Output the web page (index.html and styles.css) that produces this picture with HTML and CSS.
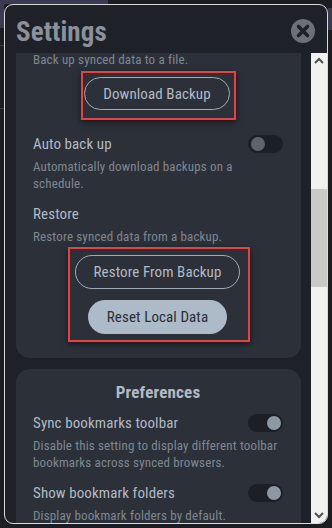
FILE: index.html
```html
<!DOCTYPE html>
<html>
<head>
<meta charset="utf-8">
<link rel="stylesheet" href="styles.css">
</head>
<body>
<div class="modal">
  <header class="modal-header">
    <h1 class="title">Settings</h1>
    <button class="close" aria-label="Close">
      <svg width="24" height="24" viewBox="0 0 24 24"><circle cx="12" cy="12" r="12" fill="#6b7079"/><path d="M7.5 7.5 L16.5 16.5 M16.5 7.5 L7.5 16.5" stroke="#1e2128" stroke-width="3.6" stroke-linecap="round"/></svg>
    </button>
  </header>
  <div class="body">
    <div class="viewport">
      <section class="card first">
        <p class="desc lead">Back up synced data to a file.</p>
        <div class="btn-row">
          <div class="hl-wrap">
            <button class="btn outline">Download Backup</button>
            <span class="hl hl-1"></span>
          </div>
        </div>
        <div class="row">
          <span class="label">Auto back up</span>
          <span class="toggle"><span class="knob"></span></span>
        </div>
        <p class="desc">Automatically download backups on a<br>schedule.</p>
        <div class="row">
          <span class="label">Restore</span>
        </div>
        <p class="desc">Restore synced data from a backup.</p>
        <div class="btn-group">
          <button class="btn outline">Restore From Backup</button>
          <button class="btn filled">Reset Local Data</button>
          <span class="hl hl-2"></span>
        </div>
      </section>
      <section class="card">
        <h2 class="card-title">Preferences</h2>
        <div class="row">
          <span class="label">Sync bookmarks toolbar</span>
          <span class="toggle on"><span class="knob"></span></span>
        </div>
        <p class="desc">Disable this setting to display different toolbar<br>bookmarks across synced browsers.</p>
        <div class="row">
          <span class="label">Show bookmark folders</span>
          <span class="toggle on"><span class="knob"></span></span>
        </div>
        <p class="desc">Display bookmark folders by default.</p>
      </section>
    </div>
    <div class="scrollbar">
      <span class="arrow">
        <svg width="16" height="16" viewBox="0 0 16 16"><path d="M4 10 L8 6 L12 10" fill="none" stroke="#505050" stroke-width="2"/></svg>
      </span>
      <span class="track">
        <span class="thumb"></span>
      </span>
      <span class="arrow">
        <svg width="16" height="16" viewBox="0 0 16 16"><path d="M4 6 L8 10 L12 6" fill="none" stroke="#505050" stroke-width="2"/></svg>
      </span>
    </div>
  </div>
</div>
</body>
</html>
```
FILE: styles.css
```css
* { box-sizing: border-box; }
html, body { margin: 0; padding: 0; }
body {
  width: 332px;
  height: 528px;
  overflow: hidden;
  font-family: "Roboto Condensed", Roboto, "Liberation Sans", sans-serif;
  background:
    linear-gradient(#3a3b50, #3a3b50) 0 0 / 108px 4px no-repeat,
    linear-gradient(#3a3b50, #3a3b50) 0 0 / 4px 28px no-repeat,
    linear-gradient(#3a3b50, #3a3b50) 328px 8px / 4px 22px no-repeat,
    linear-gradient(#3b3d45, #3b3d45) 0 45px / 4px 1px no-repeat,
    linear-gradient(#3b3d45, #3b3d45) 0 108px / 4px 1px no-repeat,
    #1b1d23;
  padding: 4px 0 0 4px;
}
.modal {
  width: 324px;
  height: 520px;
  border: 1px solid #d9dadc;
  border-radius: 9px;
  background: #1e2128;
  overflow: hidden;
  display: flex;
  flex-direction: column;
}
.modal-header {
  height: 48px;
  flex: none;
  display: flex;
  align-items: center;
  justify-content: space-between;
  padding: 0 12px 0 11px;
}
.title {
  margin: 0;
  font-size: 27px;
  font-weight: 700;
  color: #8a919b;
  line-height: 32px;
  letter-spacing: 0.1px;
  padding-top: 6px;
}
.close {
  border: 0;
  padding: 0;
  background: none;
  width: 24px;
  height: 24px;
  margin-top: 4px;
  display: block;
}
.close svg { display: block; }
.body {
  flex: 1;
  display: flex;
  min-height: 0;
}
.viewport {
  flex: 1;
  overflow: hidden;
  padding: 0 10px 0 11px;
}
.card {
  background: #2b3039;
  border-radius: 14px;
  padding: 12px 18px 24px 17px;
}
.card.first {
  border-radius: 0 0 14px 14px;
  padding-top: 0;
  margin-bottom: 11px;
}
.desc {
  margin: 4px 0 0;
  font-size: 13px;
  line-height: 17px;
  color: #7f8791;
  letter-spacing: 0.15px;
}
.desc.lead { margin-top: 0; line-height: 13px; padding-top: 0; }
.row {
  display: flex;
  align-items: center;
  justify-content: space-between;
  margin-top: 12px;
  height: 20px;
}
.label {
  font-size: 15px;
  line-height: 20px;
  color: #b2bac5;
  letter-spacing: 0.1px;
}
.card-title {
  margin: 0;
  text-align: center;
  font-size: 17px;
  line-height: 22px;
  font-weight: 700;
  color: #b2bac5;
  letter-spacing: 0.2px;
}
.card-title + .row { margin-top: 10px; }
.toggle {
  width: 35px;
  height: 18px;
  border-radius: 9px;
  background: #1c1f25;
  display: flex;
  align-items: center;
  padding: 0 3px;
  flex: none;
}
.knob {
  width: 14px;
  height: 14px;
  border-radius: 50%;
  background: #5f646d;
}
.toggle.on { justify-content: flex-end; padding: 0 2px; }
.toggle.on .knob { background: #8e98a5; }
.btn-row {
  display: flex;
  justify-content: center;
  margin-top: 11px;
  padding-right: 2px;
}
.btn-row + .row { margin-top: 24px; }
.hl-wrap { position: relative; }
.btn {
  font-family: inherit;
  font-size: 15px;
  border-radius: 17px;
  padding: 0 18px;
  cursor: pointer;
  letter-spacing: 0.1px;
  white-space: nowrap;
}
.btn.outline {
  height: 33px;
  background: transparent;
  border: 1px solid #a3aab4;
  color: #b3bbc6;
}
.btn-group .btn.outline { height: 34px; }
.btn.filled {
  height: 34px;
  background: #adbac8;
  border: 0;
  color: #2a2e35;
  padding: 0 19px;
}
.btn-group {
  position: relative;
  display: flex;
  flex-direction: column;
  align-items: center;
  gap: 11px;
  margin-top: 10px;
  padding-right: 1px;
}
.hl {
  position: absolute;
  border: 2px solid #e8413f;
  box-shadow: 0 2px 6px rgba(0, 0, 0, 0.55);
  pointer-events: none;
}
.hl-1 { left: -3px; top: -6px; width: 155px; height: 49px; }
.hl-2 { left: 35px; top: -8px; width: 182px; height: 95px; }
.scrollbar {
  width: 16px;
  flex: none;
  background: #f1f1f1;
  display: flex;
  flex-direction: column;
}
.arrow {
  height: 16px;
  flex: none;
  display: block;
}
.arrow svg { display: block; }
.track {
  flex: 1;
  display: block;
  padding-top: 120px;
}
.thumb {
  display: block;
  height: 98px;
  background: #c9c9c9;
}
```
